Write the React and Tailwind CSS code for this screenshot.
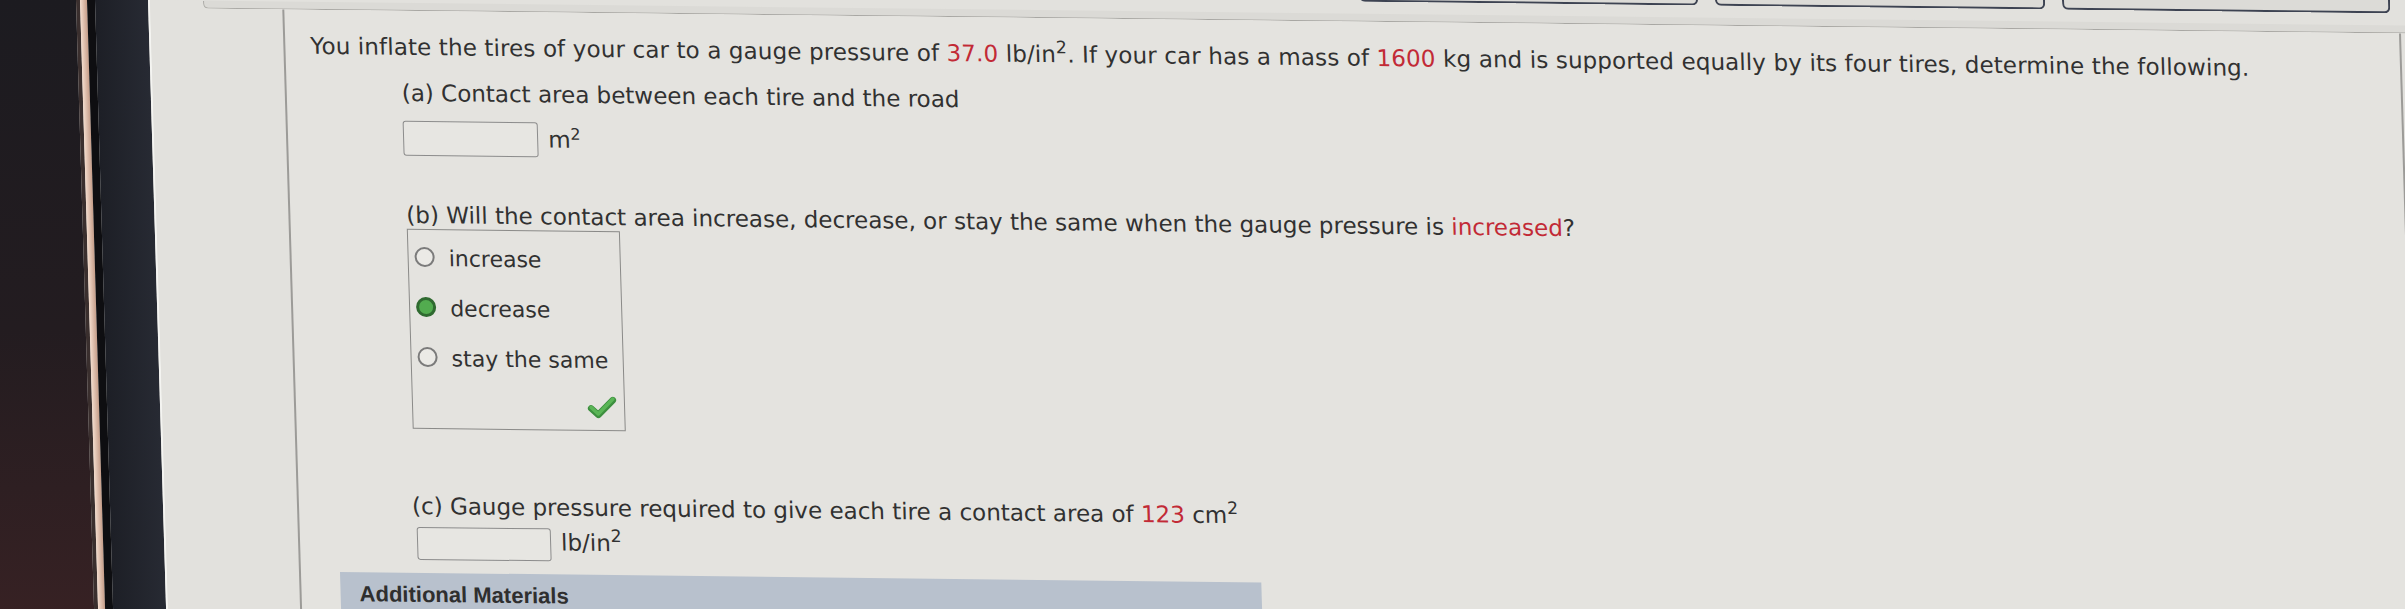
import React from "react";

const RED = "text-[#c22a36]";

function Radio({ checked }) {
  if (checked) {
    return (
      <span className="-mt-[4px] h-[20px] w-[20px] shrink-0 rounded-full border-[3px] border-[#2f6a30] bg-[#52ac4f]" />
    );
  }
  return (
    <span className="-mt-[4px] h-[20px] w-[20px] shrink-0 rounded-full border-2 border-[#7b7b7b] bg-[#ebeae6]" />
  );
}

const OPTIONS = [
  { label: "increase", checked: false },
  { label: "decrease", checked: true },
  { label: "stay the same", checked: false },
];

function Tab({ width }) {
  return (
    <div
      className={`h-full rounded-b-[6px] border-x-2 border-b-2 border-[#3d4352] bg-[#dcdbd7] ${width}`}
    />
  );
}

export default function App() {
  return (
    <div className="h-[609px] w-[2405px] overflow-hidden bg-[#e2e1dd] font-['DejaVu_Sans',sans-serif] text-[#313131]">
      {/* camera angle: whole screen leans a little */}
      <div className="-ml-[20px] flex h-[660px] w-[2430px] origin-top-left skew-x-[1.7deg]">
        {/* monitor bezel */}
        <div className="w-[96px] shrink-0 bg-linear-to-b from-[#1c1b20] via-[#231c20] to-[#3a2224]" />
        <div className="w-[4px] shrink-0 bg-[#3a2f2e]" />
        <div className="w-[7px] shrink-0 bg-linear-to-r from-[#f3dccd] to-[#c49c88]" />
        <div className="w-[8px] shrink-0 bg-[#0e0e11]" />
        <div className="w-[53px] shrink-0 bg-linear-to-r from-[#1d1f26] to-[#272a33]" />
        <div className="w-[2px] shrink-0 bg-[#f4f4f1]" />

        {/* page */}
        <div className="flex h-full flex-1 origin-top-left skew-y-[0.65deg] flex-col bg-[#e2e1dd]">
          {/* header strip with tabs */}
          <div className="flex h-[8px] shrink-0">
            <div className="w-[53px] shrink-0" />
            <div className="flex-1 rounded-bl-[5px] border-b-[1.5px] border-l border-[#a8a7a3] bg-[#dbdad6]">
              <div className="-mt-[33px] ml-[1155px] flex h-[21px] gap-[17px]">
                <Tab width="w-[339px]" />
                <Tab width="w-[330px]" />
                <Tab width="w-[328px]" />
              </div>
            </div>
          </div>

          <div className="flex flex-1">
            <div className="w-[132px] shrink-0" />
            <div className="mr-[10px] flex-1 border-x-2 border-[#9c9b98] bg-[#e4e3df] pt-[22px]">
              <p className="ml-[25px] whitespace-nowrap text-[23px] leading-[28px] tracking-[0.12px]">
                You inflate the tires of your car to a gauge pressure of{" "}
                <span className={RED}>37.0</span> lb/in<sup>2</sup>. If your car has a
                mass of <span className={RED}>1600</span> kg and is supported equally by
                its four tires, determine the following.
              </p>

              {/* (a) */}
              <p className="ml-[115px] mt-[18px] whitespace-nowrap text-[23px] leading-[28px]">
                (a) Contact area between each tire and the road
              </p>
              <div className="ml-[115px] mt-[14px] flex items-start">
                <div className="h-[35px] w-[135px] rounded-[3px] border-[1.5px] border-[#8c8c8c] bg-[#e7e6e2]" />
                <span className="ml-[10px] mt-[3px] text-[23px] leading-[28px]">
                  m<sup className="text-[16px]">2</sup>
                </span>
              </div>

              {/* (b) */}
              <p className="ml-[116px] mt-[47px] whitespace-nowrap text-[23px] leading-[24px]">
                (b) Will the contact area increase, decrease, or stay the same when the
                gauge pressure is <span className={RED}>increased</span>?
              </p>
              <div className="ml-[116px] mt-[2px] flex h-[200px] w-[213px] flex-col border-[1.5px] border-[#8a8a88] pl-[6px] pt-[4px]">
                {OPTIONS.map((o) => (
                  <div key={o.label} className="flex h-[50px] items-center gap-[14px]">
                    <Radio checked={o.checked} />
                    <span className="whitespace-nowrap text-[22px] leading-[50px]">
                      {o.label}
                    </span>
                  </div>
                ))}
                <div className="mt-[10px] flex justify-end pr-[7px]">
                  <svg width="30" height="23" viewBox="0 0 30 23">
                    <path
                      d="M4 12.5 L11 19 L26 4"
                      fill="none"
                      stroke="#3d8f3f"
                      strokeWidth="6.5"
                      strokeLinecap="round"
                      strokeLinejoin="round"
                    />
                    <path
                      d="M4 11.5 L11 18 L26 3"
                      fill="none"
                      stroke="#5ab556"
                      strokeWidth="3.5"
                      strokeLinecap="round"
                      strokeLinejoin="round"
                    />
                  </svg>
                </div>
              </div>

              {/* (c) */}
              <p className="ml-[113px] mt-[63px] whitespace-nowrap text-[23px] leading-[28px]">
                (c) Gauge pressure required to give each tire a contact area of{" "}
                <span className={RED}>123</span> cm<sup>2</sup>
              </p>
              <div className="ml-[117px] mt-[7px] flex items-start">
                <div className="h-[33px] w-[134px] rounded-[3px] border-[1.5px] border-[#8c8c8c] bg-[#e7e6e2]" />
                <span className="ml-[10px] text-[23px] leading-[28px]">
                  lb/in<sup>2</sup>
                </span>
              </div>

              {/* additional materials */}
              <div className="ml-[39px] mt-[13px] h-[80px] w-[921px] bg-[#b8c1cd] pl-[19px] pt-[10px]">
                <span className="font-['Liberation_Sans',Arial,sans-serif] text-[22px] font-bold leading-[24px] text-[#2f2f2f]">
                  Additional Materials
                </span>
              </div>
            </div>
          </div>
        </div>
      </div>
    </div>
  );
}
